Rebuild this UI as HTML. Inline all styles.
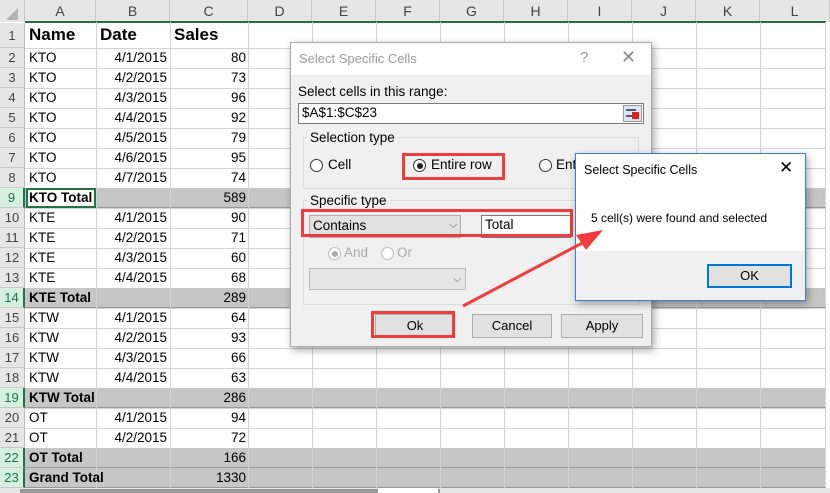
<!DOCTYPE html>
<html><head><meta charset="utf-8"><style>
*{margin:0;padding:0;box-sizing:border-box}
body{width:830px;height:493px;overflow:hidden;background:#fff;font-family:"Liberation Sans",Arial,sans-serif;position:relative;font-size:13px;color:#000}
.a{position:absolute}
.hdr{position:absolute;top:0;height:22px;background:#e6e6e6;border-right:1px solid #c8c8c8;text-align:center;line-height:22px;font-size:14px;color:#444}
.rn{position:absolute;left:0;width:25px;background:#e6e6e6;border-bottom:1px solid #c8c8c8;text-align:center;font-size:13px;color:#444;border-right:1px solid #bbb}
.vl{position:absolute;top:22px;width:1px;height:466px;background:#d4d4d4}
.hl{position:absolute;left:25px;width:801px;height:1px;background:#d4d4d4}
.tot{position:absolute;left:25px;width:801px;height:20px;background:#c6c6c6;border-bottom:1px solid #999}
.c{position:absolute;height:20px;line-height:20px;font-size:13.5px;white-space:nowrap}
.b{font-weight:bold}
.dlg{position:absolute;background:#f0f0f0;border:1px solid #aaa;box-shadow:2px 3px 8px rgba(0,0,0,.35)}
.btn{position:absolute;background:#e1e1e1;border:1px solid #adadad;text-align:center;line-height:22px;font-size:13px}
.red{position:absolute;border:3px solid #f03c3c}
.rad{position:absolute;width:13px;height:13px;border:1px solid #333;border-radius:50%;background:#fff}
</style></head><body>
<div class="hdr" style="left:0;width:25px;background:#e6e6e6"></div>
<div class="a" style="left:6px;top:8px;width:0;height:0;border-left:12px solid transparent;border-bottom:12px solid #b4b4b4"></div>
<div class="hdr" style="left:25px;width:71px">A</div>
<div class="hdr" style="left:96px;width:74px">B</div>
<div class="hdr" style="left:170px;width:78px">C</div>
<div class="hdr" style="left:248px;width:64px">D</div>
<div class="hdr" style="left:312px;width:64px">E</div>
<div class="hdr" style="left:376px;width:64px">F</div>
<div class="hdr" style="left:440px;width:64px">G</div>
<div class="hdr" style="left:504px;width:64px">H</div>
<div class="hdr" style="left:568px;width:64px">I</div>
<div class="hdr" style="left:632px;width:64px">J</div>
<div class="hdr" style="left:696px;width:64px">K</div>
<div class="hdr" style="left:760px;width:70px">L</div>
<div class="a" style="left:25px;top:21px;width:801px;height:2px;background:#217346"></div>
<div class="tot" style="top:188px"></div>
<div class="tot" style="top:288px"></div>
<div class="tot" style="top:388px"></div>
<div class="tot" style="top:448px"></div>
<div class="tot" style="top:468px"></div>
<div class="vl" style="left:96px"></div><div class="vl" style="left:170px"></div><div class="vl" style="left:248px"></div><div class="vl" style="left:312px"></div><div class="vl" style="left:376px"></div><div class="vl" style="left:440px"></div><div class="vl" style="left:504px"></div><div class="vl" style="left:568px"></div><div class="vl" style="left:632px"></div><div class="vl" style="left:696px"></div><div class="vl" style="left:760px"></div><div class="vl" style="left:825px"></div>
<div class="hl" style="top:48px"></div><div class="hl" style="top:68px"></div><div class="hl" style="top:88px"></div><div class="hl" style="top:108px"></div><div class="hl" style="top:128px"></div><div class="hl" style="top:148px"></div><div class="hl" style="top:168px"></div><div class="hl" style="top:208px"></div><div class="hl" style="top:228px"></div><div class="hl" style="top:248px"></div><div class="hl" style="top:268px"></div><div class="hl" style="top:308px"></div><div class="hl" style="top:328px"></div><div class="hl" style="top:348px"></div><div class="hl" style="top:368px"></div><div class="hl" style="top:408px"></div><div class="hl" style="top:428px"></div>
<div class="rn" style="top:23px;height:25px;line-height:25px">1</div>
<div class="rn" style="top:48px;height:20px;line-height:20px">2</div>
<div class="rn" style="top:68px;height:20px;line-height:20px">3</div>
<div class="rn" style="top:88px;height:20px;line-height:20px">4</div>
<div class="rn" style="top:108px;height:20px;line-height:20px">5</div>
<div class="rn" style="top:128px;height:20px;line-height:20px">6</div>
<div class="rn" style="top:148px;height:20px;line-height:20px">7</div>
<div class="rn" style="top:168px;height:20px;line-height:20px">8</div>
<div class="rn" style="top:188px;height:20px;line-height:20px;background:#d3f0e0;border-right:2px solid #217346;color:#217346">9</div>
<div class="rn" style="top:208px;height:20px;line-height:20px">10</div>
<div class="rn" style="top:228px;height:20px;line-height:20px">11</div>
<div class="rn" style="top:248px;height:20px;line-height:20px">12</div>
<div class="rn" style="top:268px;height:20px;line-height:20px">13</div>
<div class="rn" style="top:288px;height:20px;line-height:20px;background:#d3f0e0;border-right:2px solid #217346;color:#217346">14</div>
<div class="rn" style="top:308px;height:20px;line-height:20px">15</div>
<div class="rn" style="top:328px;height:20px;line-height:20px">16</div>
<div class="rn" style="top:348px;height:20px;line-height:20px">17</div>
<div class="rn" style="top:368px;height:20px;line-height:20px">18</div>
<div class="rn" style="top:388px;height:20px;line-height:20px;background:#d3f0e0;border-right:2px solid #217346;color:#217346">19</div>
<div class="rn" style="top:408px;height:20px;line-height:20px">20</div>
<div class="rn" style="top:428px;height:20px;line-height:20px">21</div>
<div class="rn" style="top:448px;height:20px;line-height:20px;background:#d3f0e0;border-right:2px solid #217346;color:#217346">22</div>
<div class="rn" style="top:468px;height:20px;line-height:20px;background:#d3f0e0;border-right:2px solid #217346;color:#217346">23</div>
<div class="a" style="left:0;top:488px;width:830px;height:5px;background:#e6e6e6"></div>
<div class="a" style="left:20px;top:489px;width:420px;height:4px;background:#999"></div>
<div class="a" style="left:378px;top:488px;width:60px;height:5px;background:#fff"></div>
<div class="c b" style="left:29px;top:25px;font-size:17px">Name</div>
<div class="c b" style="left:100px;top:25px;font-size:17px">Date</div>
<div class="c b" style="left:174px;top:25px;font-size:17px">Sales</div>
<div class="a" style="left:26px;top:188px;width:70px;height:20px;background:#fff;border:2px solid #217346"></div>
<div class="c" style="left:29px;top:48px">KTO</div><div class="c" style="right:663px;top:48px">4/1/2015</div><div class="c" style="right:584px;top:48px">80</div>
<div class="c" style="left:29px;top:68px">KTO</div><div class="c" style="right:663px;top:68px">4/2/2015</div><div class="c" style="right:584px;top:68px">73</div>
<div class="c" style="left:29px;top:88px">KTO</div><div class="c" style="right:663px;top:88px">4/3/2015</div><div class="c" style="right:584px;top:88px">96</div>
<div class="c" style="left:29px;top:108px">KTO</div><div class="c" style="right:663px;top:108px">4/4/2015</div><div class="c" style="right:584px;top:108px">92</div>
<div class="c" style="left:29px;top:128px">KTO</div><div class="c" style="right:663px;top:128px">4/5/2015</div><div class="c" style="right:584px;top:128px">79</div>
<div class="c" style="left:29px;top:148px">KTO</div><div class="c" style="right:663px;top:148px">4/6/2015</div><div class="c" style="right:584px;top:148px">95</div>
<div class="c" style="left:29px;top:168px">KTO</div><div class="c" style="right:663px;top:168px">4/7/2015</div><div class="c" style="right:584px;top:168px">74</div>
<div class="c b" style="left:29px;top:188px">KTO Total</div><div class="c" style="right:584px;top:188px">589</div>
<div class="c" style="left:29px;top:208px">KTE</div><div class="c" style="right:663px;top:208px">4/1/2015</div><div class="c" style="right:584px;top:208px">90</div>
<div class="c" style="left:29px;top:228px">KTE</div><div class="c" style="right:663px;top:228px">4/2/2015</div><div class="c" style="right:584px;top:228px">71</div>
<div class="c" style="left:29px;top:248px">KTE</div><div class="c" style="right:663px;top:248px">4/3/2015</div><div class="c" style="right:584px;top:248px">60</div>
<div class="c" style="left:29px;top:268px">KTE</div><div class="c" style="right:663px;top:268px">4/4/2015</div><div class="c" style="right:584px;top:268px">68</div>
<div class="c b" style="left:29px;top:288px">KTE Total</div><div class="c" style="right:584px;top:288px">289</div>
<div class="c" style="left:29px;top:308px">KTW</div><div class="c" style="right:663px;top:308px">4/1/2015</div><div class="c" style="right:584px;top:308px">64</div>
<div class="c" style="left:29px;top:328px">KTW</div><div class="c" style="right:663px;top:328px">4/2/2015</div><div class="c" style="right:584px;top:328px">93</div>
<div class="c" style="left:29px;top:348px">KTW</div><div class="c" style="right:663px;top:348px">4/3/2015</div><div class="c" style="right:584px;top:348px">66</div>
<div class="c" style="left:29px;top:368px">KTW</div><div class="c" style="right:663px;top:368px">4/4/2015</div><div class="c" style="right:584px;top:368px">63</div>
<div class="c b" style="left:29px;top:388px">KTW Total</div><div class="c" style="right:584px;top:388px">286</div>
<div class="c" style="left:29px;top:408px">OT</div><div class="c" style="right:663px;top:408px">4/1/2015</div><div class="c" style="right:584px;top:408px">94</div>
<div class="c" style="left:29px;top:428px">OT</div><div class="c" style="right:663px;top:428px">4/2/2015</div><div class="c" style="right:584px;top:428px">72</div>
<div class="c b" style="left:29px;top:448px">OT Total</div><div class="c" style="right:584px;top:448px">166</div>
<div class="c b" style="left:29px;top:468px">Grand Total</div><div class="c" style="right:584px;top:468px">1330</div>

<div class="dlg" style="left:290px;top:42px;width:362px;height:305px">
 <div class="a" style="left:0;top:0;width:360px;height:32px;background:#fff"></div>
 <div class="c" style="left:8px;top:6px;color:#999;font-size:13px">Select Specific Cells</div>
 <div class="c" style="left:289px;top:5px;color:#999;font-size:15px">?</div>
 <div class="c" style="left:330px;top:4px;color:#888;font-size:18px">✕</div>
 <div class="c" style="left:7px;top:39px">Select cells in this range:</div>
 <div class="a" style="left:7px;top:60px;width:346px;height:21px;background:#fff;border:1px solid #7a7a7a"></div>
 <div class="c" style="left:11px;top:60px">$A$1:$C$23</div>
 <div class="a" style="left:332px;top:62px;width:19px;height:17px;background:#dde6f0;border:1px solid #999"></div>
 <div class="a" style="left:335px;top:66px;width:10px;height:8px;border-top:2px solid #557;border-bottom:2px solid #557"></div>
 <div class="a" style="left:341px;top:69px;width:7px;height:7px;background:#d22"></div>
 <div class="a" style="left:12px;top:94px;width:336px;height:52px;border:1px solid #dcdcdc"></div>
 <div class="c" style="left:16px;top:85px;background:#f0f0f0;padding:0 3px">Selection type</div>
 <div class="rad" style="left:19px;top:116px"></div><div class="c" style="left:37px;top:112px">Cell</div>
 <div class="rad" style="left:122px;top:116px"></div><div class="a" style="left:126px;top:120px;width:6px;height:6px;border-radius:50%;background:#222"></div><div class="c" style="left:140px;top:112px">Entire row</div>
 <div class="rad" style="left:248px;top:116px"></div><div class="c" style="left:265px;top:112px">Enti</div>
 <div class="red" style="left:111px;top:110px;width:103px;height:27px"></div>
 <div class="a" style="left:12px;top:157px;width:336px;height:105px;border:1px solid #dcdcdc"></div>
 <div class="c" style="left:16px;top:148px;background:#f0f0f0;padding:0 3px">Specific type</div>
 <div class="a" style="left:18px;top:172px;width:152px;height:23px;background:#e1e1e1;border:1px solid #adadad"></div>
 <div class="c" style="left:22px;top:173px">Contains</div>
 <div class="c" style="left:158px;top:172px;color:#555;font-size:11px">⌵</div>
 <div class="a" style="left:190px;top:172px;width:90px;height:23px;background:#fff;border:1px solid #7a7a7a"></div>
 <div class="c" style="left:194px;top:172px">Total</div>
 <div class="red" style="left:10px;top:166px;width:272px;height:28px"></div>
 <div class="rad" style="left:37px;top:204px;border-color:#bbb"></div><div class="a" style="left:41px;top:208px;width:6px;height:6px;border-radius:50%;background:#aaa"></div><div class="c" style="left:53px;top:200px;color:#aaa">And</div>
 <div class="rad" style="left:90px;top:204px;border-color:#bbb"></div><div class="c" style="left:106px;top:200px;color:#aaa">Or</div>
 <div class="a" style="left:18px;top:225px;width:157px;height:22px;background:#e6e6e6;border:1px solid #bbb"></div>
 <div class="c" style="left:162px;top:226px;color:#555;font-size:11px">⌵</div>
 <div class="btn" style="left:84px;top:271px;width:80px;height:24px">Ok</div>
 <div class="red" style="left:80px;top:268px;width:84px;height:27px"></div>
 <div class="btn" style="left:181px;top:271px;width:80px;height:24px">Cancel</div>
 <div class="btn" style="left:270px;top:271px;width:82px;height:24px">Apply</div>
</div>
<div class="dlg" style="left:575px;top:153px;width:231px;height:148px;border-color:#3c7fd4;background:#f0f0f0">
 <div class="a" style="left:0;top:0;width:229px;height:97px;background:#fff"></div>
 <div class="c" style="left:8px;top:6px;font-size:12.5px">Select Specific Cells</div>
 <div class="c" style="left:203px;top:4px;font-size:17px">✕</div>
 <div class="c" style="left:15px;top:54px;font-size:12px">5 cell(s) were found and selected</div>
 <div class="btn" style="left:131px;top:110px;width:85px;height:24px;border:2px solid #0078d7;line-height:20px">OK</div>
</div>
<svg class="a" style="left:0;top:0" width="830" height="493"><line x1="463" y1="306" x2="588" y2="240" stroke="#f03c3c" stroke-width="3"/><polygon points="603,230 576,235 586,250" fill="#f03c3c"/></svg>
</body></html>
